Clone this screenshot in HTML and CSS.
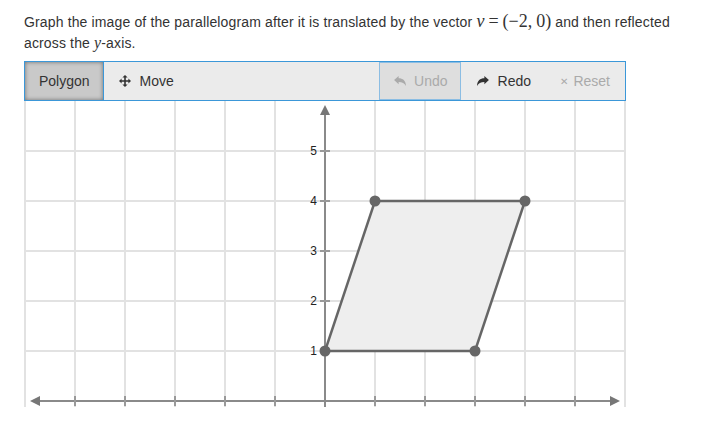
FILE: index.html
```html
<!DOCTYPE html>
<html>
<head>
<meta charset="utf-8">
<link rel="stylesheet" href="styles.css">
</head>
<body>
<div class="page">
  <p class="prompt">Graph the image of the parallelogram after it is translated by the vector <span class="math"><i>v</i><span class="rel">=</span>(−2,<span class="sp"></span>0)</span> and then reflected across the <i class="mvar">y</i>-axis.</p>
  <div class="widget">
    <div class="toolbar">
      <button class="tool active">Polygon</button>
      <button class="tool move">
        <svg class="ico" viewBox="0 0 12 12" width="12" height="12"><path d="M6 0 L8.6 2.6 H6.8 V5.2 H9.4 V3.4 L12 6 L9.4 8.6 V6.8 H6.8 V9.4 H8.6 L6 12 L3.4 9.4 H5.2 V6.8 H2.6 V8.6 L0 6 L2.6 3.4 V5.2 H5.2 V2.6 H3.4 Z" fill="#333"/></svg>
        <span>Move</span>
      </button>
      <div class="spacer"></div>
      <button class="tool undo">
        <svg class="ico" viewBox="0 0 13 11" width="12" height="10"><path d="M0 4.5 L5 0 V2.6 C9.5 2.6 13 5.2 13 11 C11.5 7.8 9 6.6 5 6.6 V9.2 Z" fill="#aaa"/></svg>
        <span>Undo</span>
      </button>
      <button class="tool redo">
        <svg class="ico" viewBox="0 0 13 11" width="12" height="10"><path d="M13 4.5 L8 0 V2.6 C3.5 2.6 0 5.2 0 11 C1.5 7.8 4 6.6 8 6.6 V9.2 Z" fill="#333"/></svg>
        <span>Redo</span>
      </button>
      <button class="tool reset"><span class="x">✕</span><span>Reset</span></button>
    </div>
    <svg class="graph" width="602" height="306" viewBox="0 0 602 306">
      <g class="grid">
        <line x1="1" y1="0" x2="1" y2="306"/>
        <line x1="51" y1="0" x2="51" y2="306"/>
        <line x1="101" y1="0" x2="101" y2="306"/>
        <line x1="151" y1="0" x2="151" y2="306"/>
        <line x1="201" y1="0" x2="201" y2="306"/>
        <line x1="251" y1="0" x2="251" y2="306"/>
        <line x1="351" y1="0" x2="351" y2="306"/>
        <line x1="401" y1="0" x2="401" y2="306"/>
        <line x1="451" y1="0" x2="451" y2="306"/>
        <line x1="501" y1="0" x2="501" y2="306"/>
        <line x1="551" y1="0" x2="551" y2="306"/>
        <line x1="601" y1="0" x2="601" y2="306"/>
        <line x1="0" y1="50" x2="602" y2="50"/>
        <line x1="0" y1="100" x2="602" y2="100"/>
        <line x1="0" y1="150" x2="602" y2="150"/>
        <line x1="0" y1="200" x2="602" y2="200"/>
        <line x1="0" y1="250" x2="602" y2="250"/>
      </g>
      <g class="axis">
        <line x1="12" y1="300" x2="592" y2="300"/>
        <line x1="301" y1="14" x2="301" y2="306"/>
        <path d="M6 300 L16 295 L16 305 Z" class="head"/>
        <path d="M596 300 L586 295 L586 305 Z" class="head"/>
        <path d="M301 4 L296 14 L306 14 Z" class="head"/>
      </g>
      <g class="ticks">
        <line x1="51" y1="295" x2="51" y2="305"/>
        <line x1="101" y1="295" x2="101" y2="305"/>
        <line x1="151" y1="295" x2="151" y2="305"/>
        <line x1="201" y1="295" x2="201" y2="305"/>
        <line x1="251" y1="295" x2="251" y2="305"/>
        <line x1="351" y1="295" x2="351" y2="305"/>
        <line x1="401" y1="295" x2="401" y2="305"/>
        <line x1="451" y1="295" x2="451" y2="305"/>
        <line x1="501" y1="295" x2="501" y2="305"/>
        <line x1="551" y1="295" x2="551" y2="305"/>
        <line x1="296" y1="50" x2="306" y2="50"/>
        <line x1="296" y1="100" x2="306" y2="100"/>
        <line x1="296" y1="150" x2="306" y2="150"/>
        <line x1="296" y1="200" x2="306" y2="200"/>
        <line x1="296" y1="250" x2="306" y2="250"/>
      </g>
      <g class="labels">
        <text x="293" y="54">5</text>
        <text x="293" y="104">4</text>
        <text x="293" y="154">3</text>
        <text x="293" y="204">2</text>
        <text x="293" y="254">1</text>
      </g>
      <polygon class="shape" points="301,250 451,250 501,100 351,100"/>
      <g class="pts">
        <circle cx="301" cy="250" r="5.5"/>
        <circle cx="451" cy="250" r="5.5"/>
        <circle cx="501" cy="100" r="5.5"/>
        <circle cx="351" cy="100" r="5.5"/>
      </g>
    </svg>
  </div>
</div>
</body>
</html>
```
FILE: styles.css
```css
html, body {
  margin: 0;
  padding: 0;
  background: #fff;
}
.page {
  padding: 12px 0 0 24px;
  font-family: "Liberation Sans", Arial, sans-serif;
  color: #333;
}
.prompt {
  margin: 0;
  width: 665px;
  font-size: 14px;
  line-height: 21px;
  letter-spacing: 0.14px;
}
.math {
  font-family: "Liberation Serif", "DejaVu Serif", serif;
  font-size: 18px;
  line-height: 14px;
  letter-spacing: 0;
}
.math i {
  font-style: italic;
}
.rel {
  margin: 0 4px;
}
.sp {
  display: inline-block;
  width: 4px;
}
.mvar {
  font-family: "Liberation Serif", serif;
  font-size: 16px;
  line-height: 14px;
}
.widget {
  margin-top: 7px;
  width: 602px;
}
.toolbar {
  display: flex;
  align-items: stretch;
  height: 38px;
  border: 1px solid #3b97d8;
  background: #ebebeb;
}
.tool {
  display: flex;
  align-items: center;
  gap: 9px;
  margin: 0;
  border: 0;
  background: transparent;
  font-family: "Liberation Sans", Arial, sans-serif;
  font-size: 14px;
  color: #333;
  padding: 0 14px;
  cursor: pointer;
}
.tool.active {
  background: #c9c9c9;
  box-shadow: inset 0 0 4px rgba(0, 0, 0, 0.45);
  border-right: 1px solid #3b97d8;
  padding: 0 13px 0 14px;
}
.tool.move {
  padding-left: 15px;
}
.spacer {
  flex: 1;
}
.tool.undo {
  background: #dedede;
  border: 1px solid #8bbde3;
  color: #aaa;
  padding: 0 12px 0 14px;
  gap: 8px;
}
.tool.redo {
  padding: 0 14px 0 16px;
}
.tool.reset {
  color: #aaa;
  gap: 5px;
  padding: 0 15px;
}
.tool .x {
  font-family: "DejaVu Sans", sans-serif;
  font-size: 10px;
}
.graph {
  display: block;
}
.grid line {
  stroke: #e2e2e2;
  stroke-width: 2;
}
.axis line {
  stroke: #8a8a8a;
  stroke-width: 2;
}
.axis .head {
  fill: #777;
}
.ticks line {
  stroke: #999;
  stroke-width: 2;
}
.labels text {
  font-family: "Liberation Sans", Arial, sans-serif;
  font-size: 12px;
  fill: #222;
  text-anchor: end;
}
.shape {
  fill: #eeeeee;
  stroke: #666;
  stroke-width: 2.5;
}
.pts circle {
  fill: #666;
}
```
